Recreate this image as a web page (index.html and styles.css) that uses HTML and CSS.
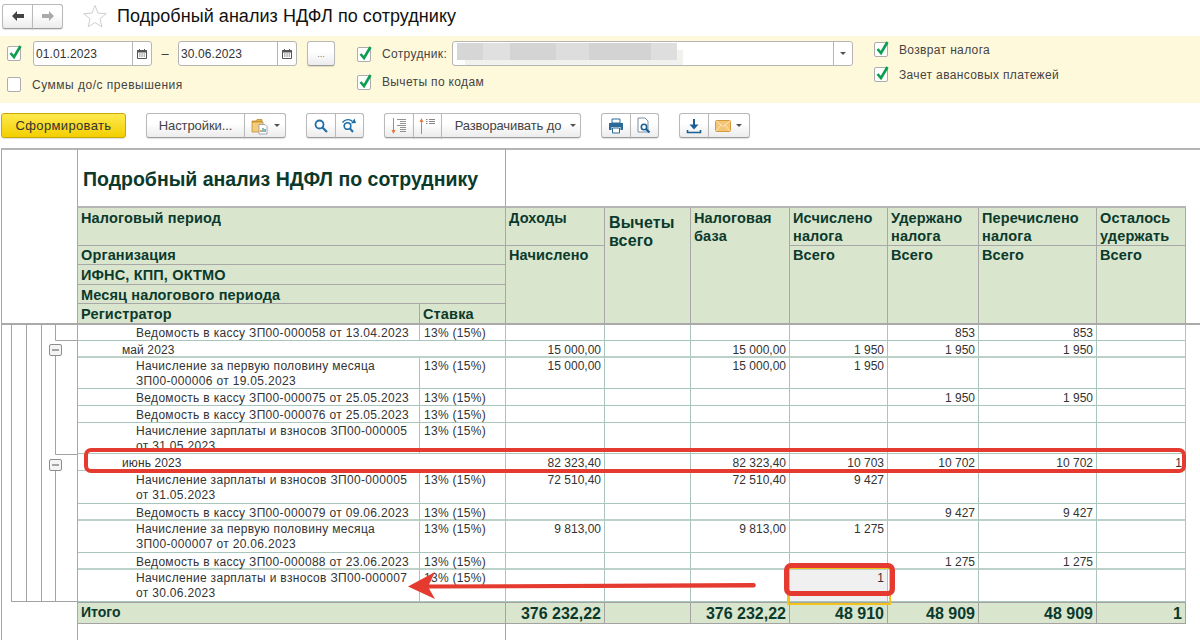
FILE: index.html
```html
<!DOCTYPE html>
<html lang="ru">
<head>
    <meta charset="UTF-8">
    <title>Подробный анализ НДФЛ по сотруднику</title>
    <link rel="stylesheet" href="styles.css">
</head>
<body>

<svg class="sprite" width="0" height="0">
    <symbol id="tick" viewBox="0 0 16 17"><path d="M3.5 9l3.5 4L13.5 2" fill="none" stroke="#0b9e4f" stroke-width="2.6"/></symbol>
    <symbol id="cal" viewBox="0 0 12 12"><path d="M1.5 2.5h9v8h-9z" fill="#fff" stroke="#555"/><path d="M1.5 2h9v2.5h-9z" fill="#555"/><path d="M3.5 1v2M8.5 1v2" stroke="#555"/><path d="M3 6h1.5M5.3 6h1.5M7.6 6h1.5M3 8h1.5M5.3 8h1.5M7.6 8h1.5" stroke="#777"/></symbol>
</svg>

<header class="top">
    <div class="btn-group nav">
        <button class="btn seg nav-btn"><svg width="14" height="12" viewBox="0 0 14 12"><path d="M6 1L1 6l5 5V8h7V4H6z" fill="#444"/></svg></button>
        <button class="btn seg nav-btn"><svg width="14" height="12" viewBox="0 0 14 12"><path d="M8 1l5 5-5 5V8H1V4h7z" fill="#aaa"/></svg></button>
    </div>
    <svg class="star" width="24" height="24" viewBox="0 0 24 24"><path d="M12 1.500l3 7.600 8.200.6-6.300 5.200 2 8-6.900-4.400-6.900 4.400 2-8L.8 9.700 9 9.100z" fill="#fff" stroke="#cfcfcf"/></svg>
    <h1>Подробный анализ НДФЛ по сотруднику</h1>
</header>

<section class="filters">
    <div class="col col-period">
        <div class="line">
            <span class="check"><svg><use href="#tick"/></svg></span>
            <span class="input date"><span class="val">01.01.2023</span><i class="pick"><svg width="12" height="12"><use href="#cal"/></svg></i></span>
            <span class="dash">–</span>
            <span class="input date"><span class="val">30.06.2023</span><i class="pick"><svg width="12" height="12"><use href="#cal"/></svg></i></span>
            <button class="btn dots">...</button>
        </div>
        <div class="line line-sum">
            <span class="check"></span>
            <label>Суммы до/с превышения</label>
        </div>
    </div>
    <div class="col col-person">
        <div class="line">
            <span class="check"><svg><use href="#tick"/></svg></span>
            <label class="person-label">Сотрудник:</label>
            <span class="input person">
                <span class="val"><span class="hidden-name"></span></span>
                <i class="pick"><b class="caret"></b></i>
            </span>
        </div>
        <div class="line line-codes">
            <span class="check"><svg><use href="#tick"/></svg></span>
            <label>Вычеты по кодам</label>
        </div>
    </div>
    <div class="col col-flags">
        <div class="line">
            <span class="check"><svg><use href="#tick"/></svg></span>
            <label>Возврат налога</label>
        </div>
        <div class="line line-offset">
            <span class="check"><svg><use href="#tick"/></svg></span>
            <label>Зачет авансовых платежей</label>
        </div>
    </div>
</section>

<nav class="toolbar">
    <button class="btn primary">Сформировать</button>
    <div class="btn-group">
        <button class="btn seg settings">Настройки...</button>
        <button class="btn seg w41">
            <svg width="18" height="18" viewBox="0 0 18 18"><path d="M1 4h4l1-1.500h5V5H1z" fill="#e8b04a" stroke="#b98421" stroke-width=".7"/><path d="M1 5h11v10H1z" fill="#f3cd7c" stroke="#b98421" stroke-width=".7"/><path d="M8 7.500h6l2 2V17H8z" fill="#fff" stroke="#8a97a5" stroke-width=".8"/><path d="M10 15v-2" stroke="#d9534f" stroke-width="1.200"/><path d="M12 15v-4" stroke="#3c9a5f" stroke-width="1.200"/><path d="M14 15v-3" stroke="#3a78b5" stroke-width="1.200"/></svg>
            <b class="caret"></b>
        </button>
    </div>
    <div class="btn-group">
        <button class="btn seg w29"><svg width="14" height="14" viewBox="0 0 14 14"><circle cx="5.500" cy="5.500" r="4" fill="none" stroke="#1f6fa8" stroke-width="1.800"/><path d="M8.500 8.500L13 13" stroke="#1f6fa8" stroke-width="2.200"/></svg></button>
        <button class="btn seg w29"><svg width="16" height="15" viewBox="0 0 16 15"><circle cx="6.500" cy="8" r="3.300" fill="none" stroke="#1f6fa8" stroke-width="1.600"/><path d="M9 10.500l3 3.500" stroke="#1f6fa8" stroke-width="2"/><path d="M1.500 4.500C4 1 9 .8 11.500 3.500" fill="none" stroke="#1f6fa8" stroke-width="1.400"/><path d="M10 5.500L15 5l-1.500-4.500z" fill="#1f6fa8"/></svg></button>
    </div>
    <div class="btn-group">
        <button class="btn seg w29"><svg width="18" height="18" viewBox="0 0 18 18"><path d="M3.500 1v13" stroke="#e8773a"/><path d="M1.500 13l2 4 2-4z" fill="#e8773a"/><path d="M7 2.500h9M10 4.500h6M10 6.500h6M7 8.500h9M10 10.500h6M10 12.500h6M10 14.500h6" stroke="#777" stroke-width=".8"/></svg></button>
        <button class="btn seg w29"><svg width="18" height="18" viewBox="0 0 18 18"><path d="M3.500 4v13" stroke="#e8773a"/><path d="M1.500 5l2-4 2 4z" fill="#e8773a"/><path d="M8 2.500h1.500M8 4.500h1.500M8 6.500h1.500M11 2.500h6M11 4.500h6M11 6.500h6" stroke="#666" stroke-width=".8"/></svg></button>
        <button class="btn seg expand">Разворачивать до<b class="caret"></b></button>
    </div>
    <div class="btn-group">
        <button class="btn seg w29"><svg width="16" height="16" viewBox="0 0 16 16"><path d="M4 1h8v4H4z" fill="#fff" stroke="#2b6a96"/><path d="M1 5h14v7h-2.500V9h-9v3H1z" fill="#2b6a96"/><path d="M4.500 10h7v5h-7z" fill="#fff" stroke="#2b6a96"/></svg></button>
        <button class="btn seg w29"><svg width="16" height="17" viewBox="0 0 16 17"><path d="M2 1h7l3 3v11H2z" fill="#fff" stroke="#7d8fa0"/><circle cx="8" cy="10" r="2.700" fill="none" stroke="#1a5f92" stroke-width="1.600"/><path d="M10 12l3.500 3.500" stroke="#1a5f92" stroke-width="2.200"/></svg></button>
    </div>
    <div class="btn-group">
        <button class="btn seg w29"><svg width="16" height="16" viewBox="0 0 16 16"><path d="M8 1v8" stroke="#1a5f92" stroke-width="2"/><path d="M3.500 6.500h9L8 11.500z" fill="#1a5f92"/><path d="M1.500 12v2.500h13V12" fill="none" stroke="#1a5f92" stroke-width="1.600"/></svg></button>
        <button class="btn seg w41">
            <svg width="16" height="12" viewBox="0 0 16 12"><rect x=".5" y=".5" width="15" height="11" rx="1" fill="#f4c574" stroke="#d59a3c"/><path d="M1 1l7 5.500L15 1M1 11l5-6M15 11l-5-6" fill="none" stroke="#fbe6bd"/></svg>
            <b class="caret"></b>
        </button>
    </div>
</nav>

<main class="report">
    <table>
        <colgroup>
            <col class="c-tree"><col class="c-reg"><col class="c-rate"><col class="c-inc"><col class="c-ded"><col class="c-base"><col class="c-calc"><col class="c-held"><col class="c-paid"><col class="c-left"><col class="c-fill">
        </colgroup>
        <thead>
            <tr class="h-title">
                <th class="tree-head" rowspan="6"></th>
                <th class="title" colspan="2">Подробный анализ НДФЛ по сотруднику</th>
                <th class="blank" colspan="7"></th>
                <th class="fill" rowspan="6"></th>
            </tr>
            <tr class="h-a">
                <th class="g" colspan="2">Налоговый период</th>
                <th class="g">Доходы</th>
                <th class="g big" rowspan="5">Вычеты<br>всего</th>
                <th class="g" rowspan="5">Налоговая<br>база</th>
                <th class="g">Исчислено<br>налога</th>
                <th class="g">Удержано<br>налога</th>
                <th class="g">Перечислено<br>налога</th>
                <th class="g">Осталось<br>удержать</th>
            </tr>
            <tr class="h-b">
                <th class="g" colspan="2">Организация</th>
                <th class="g sub" rowspan="4">Начислено</th>
                <th class="g sub" rowspan="4">Всего</th>
                <th class="g sub" rowspan="4">Всего</th>
                <th class="g sub" rowspan="4">Всего</th>
                <th class="g sub" rowspan="4">Всего</th>
            </tr>
            <tr class="h-c"><th class="g" colspan="2">ИФНС, КПП, ОКТМО</th></tr>
            <tr class="h-d"><th class="g" colspan="2">Месяц налогового периода</th></tr>
            <tr class="h-e"><th class="g">Регистратор</th><th class="g">Ставка</th></tr>
        </thead>
        <tbody>
            <tr class="h16">
                <td class="tree" rowspan="12">
                    <svg width="75" height="277" viewBox="0 0 75 277">
                        <path d="M9.500 0v277M24.500 0v277M39.500 0v277M53.500 0v15.500H75M53.500 31v98.500H75M53.500 145v132M9 276.500h66" fill="none" stroke="#a3a3a3"/>
                        <rect x="47.500" y="19.500" width="12" height="11" rx="1.500" fill="#f4f4f4" stroke="#8d8d8d"/>
                        <path d="M50 25h7" stroke="#555"/>
                        <rect x="47.500" y="134.500" width="12" height="11" rx="1.500" fill="#f4f4f4" stroke="#8d8d8d"/>
                        <path d="M50 140h7" stroke="#555"/>
                    </svg>
                </td>
                <td class="doc">Ведомость в кассу ЗП00-000058 от 13.04.2023</td><td class="rate">13% (15%)</td>
                <td></td><td></td><td></td><td></td><td>853</td><td>853</td><td></td>
            </tr>
            <tr class="h17 wide">
                <td class="month" colspan="2">май 2023</td>
                <td>15 000,00</td><td></td><td>15 000,00</td><td>1 950</td><td>1 950</td><td>1 950</td><td></td>
            </tr>
            <tr class="h31">
                <td class="doc">Начисление за первую половину месяца<br>ЗП00-000006 от 19.05.2023</td><td class="rate">13% (15%)</td>
                <td>15 000,00</td><td></td><td>15 000,00</td><td>1 950</td><td></td><td></td><td></td>
            </tr>
            <tr class="h17">
                <td class="doc">Ведомость в кассу ЗП00-000075 от 25.05.2023</td><td class="rate">13% (15%)</td>
                <td></td><td></td><td></td><td></td><td>1 950</td><td>1 950</td><td></td>
            </tr>
            <tr class="h17">
                <td class="doc">Ведомость в кассу ЗП00-000076 от 25.05.2023</td><td class="rate">13% (15%)</td>
                <td></td><td></td><td></td><td></td><td></td><td></td><td></td>
            </tr>
            <tr class="h31">
                <td class="doc">Начисление зарплаты и взносов ЗП00-000005<br>от 31.05.2023</td><td class="rate">13% (15%)</td>
                <td></td><td></td><td></td><td></td><td></td><td></td><td></td>
            </tr>
            <tr class="h17">
                <td class="month" colspan="2">июнь 2023</td>
                <td>82 323,40</td><td></td><td>82 323,40</td><td>10 703</td><td>10 702</td><td>10 702</td><td>1</td>
            </tr>
            <tr class="h33">
                <td class="doc">Начисление зарплаты и взносов ЗП00-000005<br>от 31.05.2023</td><td class="rate">13% (15%)</td>
                <td>72 510,40</td><td></td><td>72 510,40</td><td>9 427</td><td></td><td></td><td></td>
            </tr>
            <tr class="h17 wide">
                <td class="doc">Ведомость в кассу ЗП00-000079 от 09.06.2023</td><td class="rate">13% (15%)</td>
                <td></td><td></td><td></td><td></td><td>9 427</td><td>9 427</td><td></td>
            </tr>
            <tr class="h32">
                <td class="doc">Начисление за первую половину месяца<br>ЗП00-000007 от 20.06.2023</td><td class="rate">13% (15%)</td>
                <td>9 813,00</td><td></td><td>9 813,00</td><td>1 275</td><td></td><td></td><td></td>
            </tr>
            <tr class="h17 wide">
                <td class="doc">Ведомость в кассу ЗП00-000088 от 23.06.2023</td><td class="rate">13% (15%)</td>
                <td></td><td></td><td></td><td></td><td>1 275</td><td>1 275</td><td></td>
            </tr>
            <tr class="h32">
                <td class="doc">Начисление зарплаты и взносов ЗП00-000007<br>от 30.06.2023</td><td class="rate">13% (15%)</td>
                <td></td><td></td><td></td><td class="picked">1</td><td></td><td></td><td></td>
            </tr>
        </tbody>
        <tfoot>
            <tr class="total">
                <td class="tree-end"></td>
                <td class="label" colspan="2">Итого</td>
                <td>376 232,22</td><td></td><td>376 232,22</td><td>48 910</td><td>48 909</td><td>48 909</td><td>1</td>
            </tr>
            <tr class="tail">
                <td class="tree-end"></td>
                <td class="tail-cell" colspan="2"></td>
            </tr>
        </tfoot>
    </table>

    <!-- пометки поверх отчета -->
    <div class="mark mark-row"></div>
    <div class="mark mark-cell"></div>
    <svg class="arrow" width="350" height="28" viewBox="0 0 350 28">
        <path d="M0 14.500L27 0l-6 12.500 325-1.500a2.300 2.300 0 0 1 0 4.500L21 16.500 27 27z" fill="#e53a2f"/>
    </svg>
</main>

</body>
</html>
```
FILE: styles.css
```css
* {
    box-sizing: border-box;
}

html, body {
    margin: 0;
    height: 640px;
    overflow: hidden;
    background: #fff;
}

body {
    font-family: "Liberation Sans", Arial, sans-serif;
    font-size: 12px;
    color: #333;
}

.sprite {
    position: absolute;
}

/* шапка */
.top {
    display: flex;
    align-items: center;
    height: 36px;
    padding: 0 0 4px 2px;
}

.top h1 {
    margin: 0 0 0 10px;
    font-size: 18px;
    font-weight: 400;
    letter-spacing: .05px;
    color: #111;
}

.star {
    margin-left: 20px;
}

.btn-group {
    display: flex;
    flex: none;
}

.btn {
    height: 25px;
    padding: 0;
    font-family: inherit;
    font-size: 13px;
    color: #444;
    border: 1px solid #b9b9b9;
    border-bottom-color: #9c9c9c;
    border-radius: 3px;
    background: linear-gradient(#fff 40%, #ececec);
    box-shadow: 0 1px 1px rgba(0, 0, 0, .12);
    display: flex;
    align-items: center;
    justify-content: center;
}

.seg {
    border-radius: 0;
    margin-left: -1px;
}

.seg:first-child {
    margin-left: 0;
    border-radius: 3px 0 0 3px;
}

.seg:last-child {
    border-radius: 0 3px 3px 0;
}

.nav-btn {
    width: 31px;
}

.w29 {
    width: 29.500px;
}

.w41 {
    width: 42px;
    gap: 5px;
}

.caret {
    display: inline-block;
    border-style: solid;
    border-width: 3px 3px 0;
    border-color: #555 transparent transparent;
}

/* панель отбора */
.filters {
    display: flex;
    height: 67px;
    padding: 5px 0 0 7px;
    background: #fff9dc;
}

.col-period {
    width: 350px;
}

.col-person {
    width: 517px;
}

.line {
    display: flex;
    align-items: center;
}

.line label {
    letter-spacing: .35px;
    color: #444;
}

.check {
    flex: none;
    position: relative;
    display: block;
    width: 14px;
    height: 15px;
    background: #fff;
    border: 1px solid #adadad;
    border-radius: 2px;
}

.check svg {
    position: absolute;
    left: -1px;
    top: -3px;
    width: 16px;
    height: 17px;
}

.input {
    display: flex;
    height: 25px;
    font-size: 12px;
    letter-spacing: .1px;
    background: #fff;
    border: 1px solid #b5b5b5;
    border-radius: 3px;
}

.input .val {
    flex: 1;
    padding: 5px 2px;
}

.pick {
    width: 19px;
    flex: none;
    border-left: 1px solid #b5b5b5;
    display: flex;
    align-items: center;
    justify-content: center;
}

.date {
    width: 119px;
    margin-left: 12px;
}

.dash {
    width: 26px;
    margin-right: -12px;
    text-align: center;
    font-size: 13px;
}

.dots {
    width: 28px;
    margin-left: 10px;
    font-size: 9px;
    color: #777;
}

.line-sum {
    margin-top: 11px;
}

.line-sum label {
    margin-left: 11px;
    letter-spacing: .5px;
}

.col-person .line:first-child {
    height: 25px;
}

.person-label {
    margin-left: 11px;
    width: 70px;
}

.person {
    width: 401px;
}

.person .val {
    position: relative;
}

.hidden-name {
    position: absolute;
    left: 4px;
    top: 1px;
    width: 220px;
    height: 17px;
    background: linear-gradient(90deg, #d6d6d6 0 12%, #e0e0e0 12% 24%, #d4d4d4 24% 45%, #dddddd 45% 60%, #d3d3d3 60% 88%, #dedede 88%);
    box-shadow: 7px 6px 0 -1px #f1f1ee;
}

.col-person .check {
    top: 1px;
}

.line-codes {
    margin-top: 8px;
}

.line-codes label {
    margin-left: 11px;
}

.col-flags {
    padding-top: 1px;
}

.col-flags .line label {
    margin-left: 11px;
}

.line-offset {
    margin-top: 10px;
}

/* панель кнопок */
.toolbar {
    display: flex;
    gap: 20px;
    height: 35px;
    padding: 10px 0 0 1px;
}

.primary {
    width: 125px;
    border-color: #c8a900;
    background: linear-gradient(#ffe94f, #f3cf00);
    color: #333;
    letter-spacing: .35px;
}

.settings {
    width: 99px;
    letter-spacing: -.1px;
}

.expand {
    width: 140px;
    gap: 9px;
    padding-left: 9px;
    letter-spacing: -.1px;
}

/* отчет */
.report {
    position: relative;
    margin-top: 10px;
    padding-left: 1px;
}

table {
    width: 1199px;
    table-layout: fixed;
    border-collapse: separate;
    border-spacing: 0;
}

.c-tree { width: 77px; }
.c-reg { width: 342px; }
.c-rate { width: 86px; }
.c-inc { width: 99px; }
.c-ded { width: 86px; }
.c-base { width: 99px; }
.c-calc { width: 98px; }
.c-held { width: 91px; }
.c-paid { width: 118px; }
.c-left { width: 89px; }
.c-fill { width: 14px; }

th {
    padding: 0;
    text-align: left;
    vertical-align: top;
    font-size: 14.500px;
    letter-spacing: .15px;
    line-height: 18px;
    color: #0b3a2c;
}

.h-title { height: 60px; }
.h-a { height: 38px; }
.h-b { height: 19px; }
.h-c { height: 20px; }
.h-d { height: 19px; }
.h-e { height: 21px; }

.tree-head {
    border-top: 2px solid #b5b5b5;
    border-left: 1px solid #a8a8a8;
    border-right: 1px solid #a8a8a8;
    border-bottom: 2px solid #aaa;
}

.title {
    font-size: 19.500px;
    letter-spacing: 0;
    line-height: 24px;
    padding: 17px 0 0 5px;
    border-top: 2px solid #b5b5b5;
    border-right: 1px solid #a8a8a8;
    border-bottom: 2px solid #b5b5b5;
}

.blank {
    border-top: 2px solid #b5b5b5;
    border-bottom: 2px solid #b5b5b5;
}

.fill {
    border-top: 2px solid #b5b5b5;
    border-bottom: 2px solid #aaa;
}

.g {
    padding: 1px 0 0 3px;
    background: #d9e5cd;
    border-right: 1px solid #a8a8a8;
    border-bottom: 1px solid #a8a8a8;
}

.h-b .g {
    padding-top: 1px;
    line-height: 16px;
}

.h-c .g,
.h-d .g,
.h-e .g {
    padding-top: 2px;
    line-height: 16px;
}

.big {
    font-size: 16px;
    padding: 6px 0 0 4px;
}

thead tr:last-child .g,
.g[rowspan] {
    border-bottom-width: 2px;
    border-bottom-color: #aaa;
}

td {
    padding: 2px 3px 0 0;
    text-align: right;
    vertical-align: top;
    line-height: 14px;
    white-space: nowrap;
    border-right: 1px solid #a9c6bc;
    border-bottom: 1px solid #a9c6bc;
}

.wide td {
    border-bottom-color: #bcd2c9;
    box-shadow: inset 0 -1px 0 #bcd2c9;
}

.h16 { height: 16px; }
.h17 { height: 17px; }
.h31 { height: 31px; }
.h32 { height: 32px; }
.h33 { height: 33px; }

.h16 td {
    padding-top: 1px;
}

.h31 td {
    padding-top: 1px;
    line-height: 14.500px;
}

.h32 td {
    padding-top: 1px;
    line-height: 15px;
}

.h33 td {
    line-height: 15px;
}

td.tree {
    padding: 0;
    border-left: 1px solid #a8a8a8;
    border-right: 1px solid #a8a8a8;
    border-bottom: 0;
}

.tree svg {
    display: block;
}

td.doc {
    text-align: left;
    padding-left: 58px;
    letter-spacing: .32px;
}

td.month {
    text-align: left;
    padding-left: 44px;
    letter-spacing: .1px;
}

td.rate {
    text-align: left;
    padding-left: 4px;
    letter-spacing: .3px;
}

td.picked {
    background: #f0f0f0;
    outline: 2px solid #f2c31b;
    outline-offset: 1px;
    position: relative;
    z-index: 1;
}

.total {
    height: 22px;
}

.total td {
    padding: 2px 3px 0 0;
    font-size: 16px;
    line-height: 18px;
    font-weight: 700;
    color: #0b3a2c;
    background: #d9e5cd;
    border-right: 1px solid #a3a3a3;
    border-top: 1px solid #a3a3a3;
    border-bottom: 1px solid #a3a3a3;
}

.total td.label {
    text-align: left;
    padding: 0 0 0 3px;
    font-size: 14px;
}

.total td.tree-end,
.tail td.tree-end {
    background: #fff;
    border-top: 0;
    border-left: 1px solid #a8a8a8;
    border-right: 1px solid #a8a8a8;
    border-bottom: 0;
}

.tail {
    height: 17px;
}

.tail-cell {
    border-right: 1px solid #a8a8a8;
    border-bottom: 0;
}

/* красные пометки */
.mark {
    position: absolute;
    border: 4px solid #e53a2f;
    border-radius: 7px;
    z-index: 2;
}

.mark-row {
    left: 84px;
    top: 300px;
    width: 1102px;
    height: 25px;
}

.mark-cell {
    left: 784px;
    top: 415px;
    width: 111px;
    height: 33px;
    border-width: 5px;
}

.arrow {
    position: absolute;
    left: 408px;
    top: 424px;
    z-index: 2;
}
```
